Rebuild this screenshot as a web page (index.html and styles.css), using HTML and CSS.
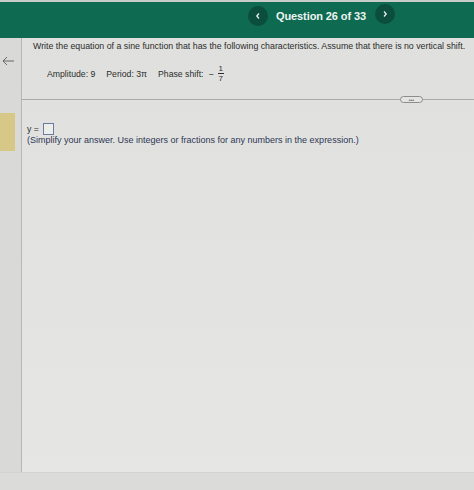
FILE: index.html
```html
<!DOCTYPE html>
<html>
<head>
<meta charset="utf-8">
<link rel="stylesheet" href="styles.css">
</head>
<body>
<div class="page">
  <header class="topbar">
    <div class="nav">
      <span class="navbtn prev"><svg width="8" height="8" viewBox="0 0 8 8"><path d="M5 1.5 L2.8 4 L5 6.5" fill="none" stroke="#e8efec" stroke-width="1.3"/></svg></span>
      <span class="title">Question 26 of 33</span>
      <span class="navbtn next"><svg width="8" height="8" viewBox="0 0 8 8"><path d="M3 1.5 L5.2 4 L3 6.5" fill="none" stroke="#e8efec" stroke-width="1.3"/></svg></span>
    </div>
  </header>
  <div class="body">
    <aside class="side">
      <svg class="back" width="14" height="10" viewBox="0 0 14 10"><path d="M13 5 H2 M6 1 L2 5 L6 9" fill="none" stroke="#5a5c5a" stroke-width="0.9"/></svg>
      <div class="marker"></div>
    </aside>
    <main class="content">
      <section class="question">
        <p class="prompt">Write the equation of a sine function that has the following characteristics. Assume that there is no vertical shift.</p>
        <p class="given">
          <span>Amplitude: 9</span>
          <span>Period: 3π</span>
          <span class="shift">Phase shift: <span class="minus">−</span><span class="frac"><span class="num">1</span><span class="den">7</span></span></span>
        </p>
      </section>
      <div class="divider"><span class="pill">•••</span></div>
      <section class="answer">
        <div class="eq">y = <span class="box"></span></div>
        <p class="hint">(Simplify your answer. Use integers or fractions for any numbers in the expression.)</p>
      </section>
    </main>
  </div>
  <footer class="bottom"></footer>
</div>
</body>
</html>
```
FILE: styles.css
```css
html, body {
  margin: 0;
  padding: 0;
  width: 474px;
  height: 490px;
  overflow: hidden;
  background: #e2e3e0;
  font-family: "Liberation Sans", Arial, sans-serif;
  color: #2b2c2b;
}
.page {
  display: flex;
  flex-direction: column;
  height: 490px;
  background: linear-gradient(#dfe0dd, #e6e7e4);
}
.topbar {
  height: 38px;
  flex: none;
  background: #0f6a52;
  border-top: 2px solid #c9cdc9;
  display: flex;
  align-items: flex-start;
  padding-left: 248px;
  box-sizing: border-box;
}
.nav {
  display: flex;
  align-items: center;
  margin-top: 4px;
}
.navbtn {
  width: 20px;
  height: 20px;
  border-radius: 50%;
  background: #0b4e3d;
  display: flex;
  align-items: center;
  justify-content: center;
}
.navbtn.next {
  margin-top: -4px;
  margin-left: 9px;
}
.title {
  color: #eef3f0;
  font-weight: bold;
  font-size: 11px;
  margin-left: 8px;
  letter-spacing: -0.1px;
}
.body {
  flex: 1;
  display: flex;
}
.side {
  width: 21px;
  flex: none;
  background: #d9dad7;
  border-right: 1px solid #b6b8b5;
  display: flex;
  flex-direction: column;
}
.back {
  margin: 18px 0 0 1px;
}
.marker {
  width: 15px;
  height: 38px;
  margin-top: 47px;
  background: #d8c888;
}
.content {
  flex: 1;
  display: flex;
  flex-direction: column;
}
.question {
  padding: 3px 0 0 11px;
}
.prompt {
  margin: 0;
  font-size: 8.8px;
  white-space: nowrap;
}
.given {
  margin: 13px 0 0 14px;
  font-size: 8.7px;
  display: flex;
  align-items: center;
  gap: 11px;
}
.shift {
  display: inline-flex;
  align-items: center;
}
.minus {
  margin: 0 4px 0 5px;
}
.frac {
  display: inline-flex;
  flex-direction: column;
  align-items: center;
  font-size: 8px;
  line-height: 9px;
}
.num {
  border-bottom: 0.8px solid #2b2c2b;
  padding: 0 1px;
}
.divider {
  margin-top: 16px;
  height: 1px;
  background: #a9aba8;
  position: relative;
}
.pill {
  position: absolute;
  left: 378px;
  top: -3px;
  width: 23px;
  height: 7px;
  border: 1px solid #8c8e8b;
  border-radius: 4px;
  background: #e4e5e2;
  font-size: 5px;
  line-height: 6px;
  text-align: center;
  color: #666;
  box-sizing: border-box;
}
.answer {
  padding: 23px 0 0 5px;
}
.eq {
  font-size: 8.8px;
  display: flex;
  align-items: center;
  gap: 2px;
}
.box {
  display: inline-block;
  width: 9px;
  height: 10px;
  border: 1px solid #6e7aa6;
  background: #eceeea;
  margin-left: 2px;
}
.hint {
  margin: 0;
  font-size: 9px;
  color: #2e3656;
  white-space: nowrap;
}
.bottom {
  height: 17px;
  flex: none;
  background: #dbdcd9;
  border-top: 1px solid #d2d3d0;
}
```
